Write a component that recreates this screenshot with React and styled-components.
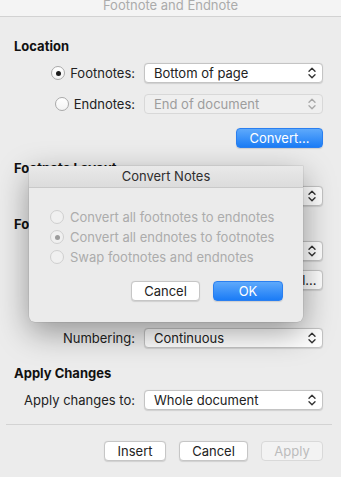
import React from 'react';
import styled, { createGlobalStyle } from 'styled-components';

const GlobalStyle = createGlobalStyle`
    html, body {
        margin: 0;
        padding: 0;
        background: #ececec;
    }
    body {
        font-family: Inter, "Liberation Sans", sans-serif;
        font-size: 13px;
        color: #222;
        -webkit-font-smoothing: antialiased;
    }
`

const Chevrons = () => (
    <svg width="8" height="12" viewBox="0 0 8 12" fill="none" stroke="currentColor" strokeWidth="1.4" strokeLinecap="round" strokeLinejoin="round">
        <path d="M1 4.2 L4 1.2 L7 4.2" />
        <path d="M1 7.8 L4 10.8 L7 7.8" />
    </svg>
)

const Select = ({ value, disabled }) => (
    <SelectBox disabled={disabled}>
        <span>{value}</span>
        <Chevrons />
    </SelectBox>
)

const App = () => {
    return (
        <Window>
            <GlobalStyle />
            <TitleBar>Footnote and Endnote</TitleBar>
            <Body>
                <Heading>Location</Heading>
                <Form $top={9}>
                    <Label>
                        <Radio $checked />
                        Footnotes:
                    </Label>
                    <Select value="Bottom of page" />
                    <Label>
                        <Radio />
                        Endnotes:
                    </Label>
                    <Select value="End of document" disabled />
                </Form>
                <ButtonRow $top={14}>
                    <Button $primary $width={87}>Convert...</Button>
                </ButtonRow>

                <Heading $top={12}>Footnote Layout</Heading>
                <Form $top={10}>
                    <Label>Columns:</Label>
                    <Select value="Match section layout" />
                </Form>

                <Heading $top={10}>Format</Heading>
                <Form $top={9} $gap={9}>
                    <Label>Number format:</Label>
                    <Select value="1, 2, 3, ..." />
                    <Label>Custom mark:</Label>
                    <ButtonRow>
                        <Field $width={90} />
                        <Button $width={70}>Symbol...</Button>
                    </ButtonRow>
                    <Label>Start at:</Label>
                    <ButtonRow $start>
                        <Field $width={50}>1</Field>
                    </ButtonRow>
                    <Label>Numbering:</Label>
                    <Select value="Continuous" />
                </Form>

                <Heading $top={17}>Apply Changes</Heading>
                <Form $top={9}>
                    <Label>Apply changes to:</Label>
                    <Select value="Whole document" />
                </Form>
            </Body>
            <Separator />
            <Footer>
                <Button $width={62}>Insert</Button>
                <Button $width={69}>Cancel</Button>
                <Button $width={62} disabled>Apply</Button>
            </Footer>

            <Sheet>
                <SheetTitle>Convert Notes</SheetTitle>
                <SheetBody>
                    <Option>
                        <Radio $dim />
                        Convert all footnotes to endnotes
                    </Option>
                    <Option>
                        <Radio $dim $checked />
                        Convert all endnotes to footnotes
                    </Option>
                    <Option>
                        <Radio $dim />
                        Swap footnotes and endnotes
                    </Option>
                    <SheetButtons>
                        <Button $width={69}>Cancel</Button>
                        <Button $primary $width={70}>OK</Button>
                    </SheetButtons>
                </SheetBody>
            </Sheet>
        </Window>
    )
}

const Window = styled.div`
    position: relative;
    width: 341px;
    height: 477px;
    overflow: hidden;
    background: #ececec;
`

const TitleBar = styled.div`
    height: 16px;
    line-height: 11px;
    text-align: center;
    color: #ababab;
    font-size: 13px;
    background: #f4f4f4;
    border-bottom: 1px solid #d2d2d2;
    overflow: hidden;
`

const Body = styled.div`
    padding: 21px 18px 0 14px;
`

const Heading = styled.div`
    margin-top: ${p => p.$top || 0}px;
    height: 16px;
    line-height: 16px;
    font-weight: 700;
    color: #111;
`

const Form = styled.div`
    margin-top: ${p => p.$top || 0}px;
    display: grid;
    grid-template-columns: 121px 179px;
    column-gap: 9px;
    row-gap: ${p => p.$gap || 11}px;
    align-items: center;
`

const Label = styled.div`
    display: flex;
    align-items: center;
    justify-content: flex-end;
    gap: 5px;
    color: #222;
    white-space: nowrap;
`

const Radio = styled.span`
    position: relative;
    width: 14px;
    height: 14px;
    box-sizing: border-box;
    border-radius: 50%;
    border: 1px solid ${p => p.$dim ? '#cfcfcf' : '#a9a9a9'};
    background: ${p => p.$dim ? '#f0f0f0' : 'linear-gradient(#ffffff, #f3f3f3)'};
    flex-shrink: 0;
    &::after {
        content: '';
        display: ${p => p.$checked ? 'block' : 'none'};
        position: absolute;
        left: 3.5px;
        top: 3.5px;
        width: 5px;
        height: 5px;
        border-radius: 50%;
        background: ${p => p.$dim ? '#9c9c9c' : '#1d1d1d'};
    }
`

const SelectBox = styled.div`
    height: 20px;
    box-sizing: border-box;
    display: flex;
    align-items: center;
    justify-content: space-between;
    padding: 0 6px 0 9px;
    border-radius: 4px;
    border: 1px solid ${p => p.disabled ? '#d8d8d8' : '#c4c4c4'};
    background: ${p => p.disabled ? '#efefef' : '#fff'};
    color: ${p => p.disabled ? '#9d9d9d' : '#222'};
    box-shadow: ${p => p.disabled ? 'none' : '0 0.5px 1px rgba(0,0,0,0.12)'};
    svg {
        color: ${p => p.disabled ? '#a8a8a8' : '#333'};
    }
`

const Field = styled.div`
    width: ${p => p.$width}px;
    height: 20px;
    box-sizing: border-box;
    padding: 0 5px;
    line-height: 18px;
    background: #fff;
    border: 1px solid #c8c8c8;
`

const ButtonRow = styled.div`
    margin-top: ${p => p.$top || 0}px;
    display: flex;
    justify-content: ${p => p.$start ? 'flex-start' : 'space-between'};
    &:only-child, & > :only-child {
        margin-left: auto;
    }
    ${p => p.$start && '& > :only-child { margin-left: 0; }'}
`

const Button = styled.button`
    width: ${p => p.$width}px;
    height: 20px;
    padding: 0;
    box-sizing: border-box;
    font-family: inherit;
    font-size: 13px;
    border-radius: 4px;
    border: 1px solid ${p => p.$primary ? '#2a7ff0' : '#c6c6c6'};
    background: ${p => p.$primary ? 'linear-gradient(#5ea9fb, #1b7cf6)' : '#fff'};
    color: ${p => p.$primary ? '#fff' : '#222'};
    box-shadow: 0 0.5px 1px rgba(0,0,0,0.12);
    &:disabled {
        background: #f3f3f3;
        border-color: #d9d9d9;
        color: #bcbcbc;
        box-shadow: none;
    }
`

const Separator = styled.div`
    margin: 14px 9px 0 6px;
    height: 1px;
    background: #d3d3d3;
`

const Footer = styled.div`
    margin-top: 16px;
    padding-right: 18px;
    display: flex;
    justify-content: flex-end;
    gap: 13px;
`

const Sheet = styled.div`
    position: absolute;
    left: 29px;
    top: 166px;
    width: 274px;
    height: 156px;
    background: #ebebeb;
    border-radius: 0 0 6px 6px;
    box-shadow: 0 10px 32px rgba(0,0,0,0.38), 0 0 0 0.5px rgba(0,0,0,0.12);
    overflow: hidden;
`

const SheetTitle = styled.div`
    height: 21px;
    line-height: 21px;
    text-align: center;
    color: #2e2e2e;
    background: linear-gradient(#e9e9e9, #dcdcdc);
    border-bottom: 1px solid #c9c9c9;
`

const SheetBody = styled.div`
    padding: 22px 20px 0 21px;
    display: flex;
    flex-direction: column;
    gap: 6px;
`

const Option = styled.div`
    display: flex;
    align-items: center;
    gap: 6px;
    height: 14px;
    color: #acacac;
    white-space: nowrap;
`

const SheetButtons = styled.div`
    margin-top: 11px;
    display: flex;
    justify-content: flex-end;
    gap: 13px;
`

export default App
